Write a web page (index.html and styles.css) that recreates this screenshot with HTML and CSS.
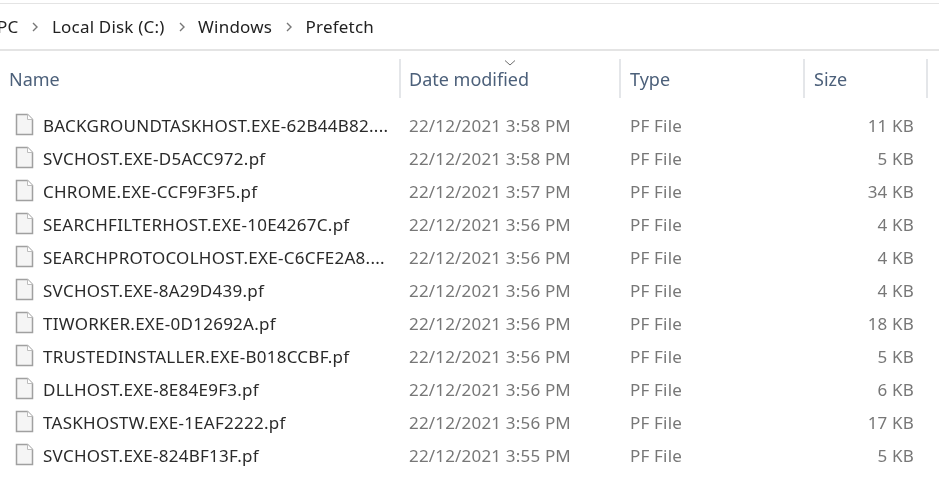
FILE: index.html
```html
<!DOCTYPE html>
<html lang="en">
<head>
    <meta charset="UTF-8">
    <title>Prefetch</title>
    <link rel="stylesheet" href="styles.css">
</head>
<body>
<div class="breadcrumb">
    <span class="crumb">PC</span>
    <svg class="chevron" viewBox="0 0 8 10"><path d="M2 1l4 4-4 4"/></svg>
    <span class="crumb">Local Disk (C:)</span>
    <svg class="chevron" viewBox="0 0 8 10"><path d="M2 1l4 4-4 4"/></svg>
    <span class="crumb">Windows</span>
    <svg class="chevron" viewBox="0 0 8 10"><path d="M2 1l4 4-4 4"/></svg>
    <span class="crumb">Prefetch</span>
</div>
<div class="header">
    <div class="col-head col-name">Name</div>
    <div class="col-head col-date">Date modified
        <svg class="sort" viewBox="0 0 12 6"><path d="M1 .5l5 4.5 5-4.5"/></svg>
    </div>
    <div class="col-head col-type">Type</div>
    <div class="col-head col-size">Size</div>
</div>
<div class="files" id="files"></div>
<script>
    const rows = [
        ['BACKGROUNDTASKHOST.EXE-62B44B82....', '22/12/2021 3:58 PM', '11 KB'],
        ['SVCHOST.EXE-D5ACC972.pf', '22/12/2021 3:58 PM', '5 KB'],
        ['CHROME.EXE-CCF9F3F5.pf', '22/12/2021 3:57 PM', '34 KB'],
        ['SEARCHFILTERHOST.EXE-10E4267C.pf', '22/12/2021 3:56 PM', '4 KB'],
        ['SEARCHPROTOCOLHOST.EXE-C6CFE2A8....', '22/12/2021 3:56 PM', '4 KB'],
        ['SVCHOST.EXE-8A29D439.pf', '22/12/2021 3:56 PM', '4 KB'],
        ['TIWORKER.EXE-0D12692A.pf', '22/12/2021 3:56 PM', '18 KB'],
        ['TRUSTEDINSTALLER.EXE-B018CCBF.pf', '22/12/2021 3:56 PM', '5 KB'],
        ['DLLHOST.EXE-8E84E9F3.pf', '22/12/2021 3:56 PM', '6 KB'],
        ['TASKHOSTW.EXE-1EAF2222.pf', '22/12/2021 3:56 PM', '17 KB'],
        ['SVCHOST.EXE-824BF13F.pf', '22/12/2021 3:55 PM', '5 KB']
    ];
    const icon = '<svg class="file-icon" viewBox="0 0 19 23"><path class="page" d="M1.5 1.5h11l5 5v15h-16z"/><path class="fold" d="M12.5 1.5v5h5"/></svg>';
    const files = document.getElementById('files');
    rows.forEach(row => {
        const el = document.createElement('div');
        el.className = 'file-row';
        el.innerHTML = '<div class="cell-name">' + icon + '<span>' + row[0] + '</span></div>' +
            '<div class="cell-date">' + row[1] + '</div>' +
            '<div class="cell-type">PF File</div>' +
            '<div class="cell-size">' + row[2] + '</div>';
        files.appendChild(el);
    });
</script>
</body>
</html>
```

FILE: styles.css
```css
html, body {
    height: 100%;
}

body {
    margin: 0;
    overflow: hidden;
    background-color: #fff;
    font-family: "Noto Sans", "Open Sans", sans-serif;
    font-size: 17px;
    letter-spacing: 0.18px;
    filter: blur(0.35px);
}

.breadcrumb {
    display: flex;
    align-items: center;
    height: 45px;
    margin-top: 3px;
    margin-left: -3px;
    border-top: 1px solid #e4e4e4;
    border-bottom: 2px solid #e4e4e4;
    color: #222;
    letter-spacing: 0.2px;
}

.chevron {
    width: 8px;
    height: 10px;
    margin: 0 12.5px 0 13px;
    fill: none;
    stroke: #777;
    stroke-width: 1.4;
}

.header {
    display: grid;
    grid-template-columns: 401px 220px 184px 123px;
    margin-top: 8px;
    height: 39px;
}

.col-head {
    position: relative;
    display: flex;
    align-items: center;
    padding-left: 9px;
    border-right: 2px solid #e4e6e9;
    color: #4c607a;
    font-size: 18px;
    letter-spacing: 0;
}

.col-date {
    padding-left: 8px;
}

.sort {
    position: absolute;
    top: 1px;
    left: 103px;
    width: 12px;
    height: 6px;
    fill: none;
    stroke: #6d6d6d;
    stroke-width: 1;
}

.files {
    margin-top: 11px;
}

.file-row {
    display: grid;
    grid-template-columns: 400px 221px 184px 109px;
    align-items: center;
    height: 33px;
    color: #777;
}

.cell-name {
    display: flex;
    align-items: center;
    padding-left: 15px;
    color: #2a2a2a;
    letter-spacing: 0.26px;
}

.file-icon {
    flex: none;
    width: 19px;
    height: 23px;
    margin-top: -3px;
    margin-right: 9px;
}

.page {
    fill: #f5f5f5;
    stroke: #a0a0a0;
    stroke-width: 1.5;
}

.fold {
    fill: #fff;
    stroke: #bcbcbc;
}

.cell-date {
    padding-left: 9px;
}

.cell-type {
    padding-left: 9px;
}

.cell-size {
    text-align: right;
}
```
